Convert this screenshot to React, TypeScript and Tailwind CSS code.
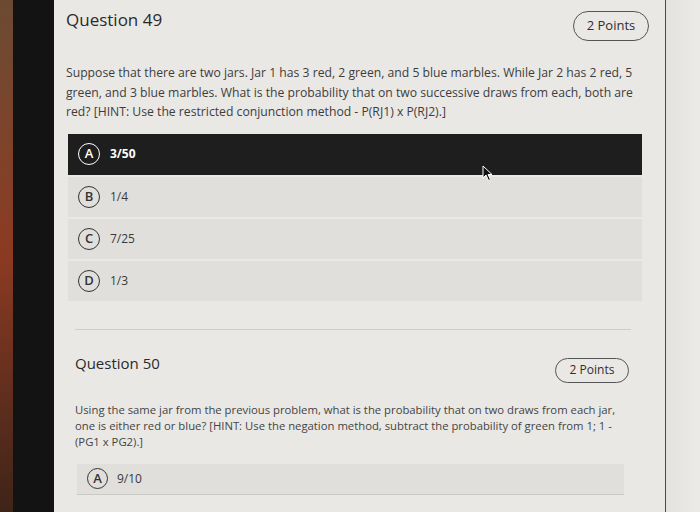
import React from 'react'

const font = { fontFamily: '"Open Sans", "Liberation Sans", sans-serif' }

function Letter({ letter, selected, size = 22 }: { letter: string; selected?: boolean; size?: number }) {
  return (
    <div
      className={`flex items-center justify-center rounded-full border-[1.5px] shrink-0 text-[13px] font-semibold ${
        selected ? 'border-white text-white' : 'border-[#333] text-[#333]'
      }`}
      style={{ width: size, height: size }}
    >
      {letter}
    </div>
  )
}

function Option({ letter, text, selected }: { letter: string; text: string; selected?: boolean }) {
  return (
    <div
      className={`flex items-center gap-[10px] pl-[10px] ${
        selected ? 'h-[41px] bg-[#1e1e1e]' : 'h-[40px] bg-[#e1dfdc]'
      }`}
    >
      <Letter letter={letter} selected={selected} />
      <span className={`text-[12px] ${selected ? 'font-bold text-white' : 'text-[#3a3a3a]'}`}>{text}</span>
    </div>
  )
}

function Points({ w, h, size }: { w: number; h: number; size: string }) {
  return (
    <div
      className={`flex items-center justify-center rounded-full border-[1.5px] border-[#555] text-[#2e2e2e] ${size}`}
      style={{ width: w, height: h }}
    >
      2 Points
    </div>
  )
}

export default function App() {
  return (
    <div className="relative flex w-[700px] h-[512px] overflow-hidden" style={font}>
      {/* wood behind the monitor */}
      <div className="w-[13px] bg-linear-to-b from-[#6b4a32] via-[#8c3a22] to-[#3e2418]" />
      {/* bezel */}
      <div className="w-[41px] bg-[#131313]" />

      {/* page */}
      <div className="w-[612px] bg-[#eae8e5] border-r-[1.5px] border-[#4a4a4a]">
        {/* Question 49 */}
        <div className="pl-[12px] pr-[16px] pt-[10px]">
          <div className="flex justify-between items-start">
            <h2 className="text-[17px] leading-[20px] text-[#2a2a2a]">Question 49</h2>
            <div className="mt-[1px]">
              <Points w={76} h={30} size="text-[13px]" />
            </div>
          </div>
          <p className="mt-[22px] text-[12.2px] leading-[19.5px] text-[#3d3d3d] whitespace-nowrap">
            Suppose that there are two jars. Jar 1 has 3 red, 2 green, and 5 blue marbles. While Jar 2 has 2 red, 5
            <br />
            green, and 3 blue marbles. What is the probability that on two successive draws from each, both are
            <br />
            red? [HINT: Use the restricted conjunction method - P(RJ1) x P(RJ2).]
          </p>
        </div>

        <div className="ml-[14px] mr-[23px] mt-[12px] flex flex-col gap-[2px]">
          <Option letter="A" text="3/50" selected />
          <Option letter="B" text="1/4" />
          <Option letter="C" text="7/25" />
          <Option letter="D" text="1/3" />
        </div>

        <div className="ml-[21px] mr-[34px] mt-[28px] h-px bg-[#cfcdca]" />

        {/* Question 50 */}
        <div className="pl-[21px] pr-[36px] pt-[23px]">
          <div className="flex justify-between items-start">
            <h2 className="text-[15px] leading-[20px] text-[#2a2a2a]">Question 50</h2>
            <div className="mt-[5px]">
              <Points w={74} h={25} size="text-[12px]" />
            </div>
          </div>
          <p className="mt-[19px] text-[11.3px] leading-[16px] text-[#444] whitespace-nowrap">
            Using the same jar from the previous problem, what is the probability that on two draws from each jar,
            <br />
            one is either red or blue? [HINT: Use the negation method, subtract the probability of green from 1; 1 -
            <br />
            (PG1 x PG2).]
          </p>
        </div>

        <div className="ml-[23px] mr-[41px] mt-[14px] h-[31px] bg-[#e1dfdc] border-b border-[#cbc9c6] flex items-center gap-[9px] pl-[10px]">
          <Letter letter="A" size={21} />
          <span className="text-[12px] text-[#3a3a3a]">9/10</span>
        </div>
      </div>

      {/* beyond the window edge */}
      <div className="flex-1 bg-linear-to-r from-[#e4e2df] to-[#ecebe8]" />

      {/* mouse pointer */}
      <svg className="absolute left-[482px] top-[165px]" width="12" height="17" viewBox="0 0 12 17">
        <path d="M1 1 L1 13 L4 10 L6.5 15.5 L8.5 14.5 L6 9.5 L10 9.5 Z" fill="#111" stroke="#fff" strokeWidth="1" />
      </svg>
    </div>
  )
}
